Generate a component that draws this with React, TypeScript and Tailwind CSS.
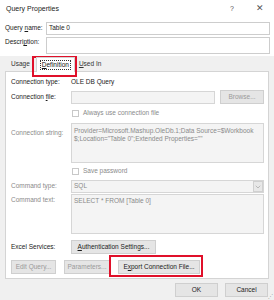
import { ChevronDown } from "lucide-react";

const font = { fontFamily: '"Liberation Sans", Arial, sans-serif' };

function Label({ children, dim }: { children: React.ReactNode; dim?: boolean }) {
  return (
    <div className={`w-[60px] shrink-0 ${dim ? "text-[#8a8a8a]" : "text-[#1a1a1a]"}`}>
      {children}
    </div>
  );
}

function Btn({
  children,
  disabled,
  className = "",
}: {
  children: React.ReactNode;
  disabled?: boolean;
  className?: string;
}) {
  return (
    <div
      className={`flex h-[14px] shrink-0 items-center justify-center whitespace-nowrap border border-[#cfcfcf] bg-[#e5e5e5] ${
        disabled ? "text-[#9a9a9a]" : "text-[#1a1a1a]"
      } ${className}`}
    >
      {children}
    </div>
  );
}

function Check({ label }: { label: string }) {
  return (
    <div className="flex h-[10px] items-center gap-[4px] pl-[61px] text-[#8a8a8a]">
      <div className="h-[7px] w-[7px] border border-[#c8c8c8] bg-white" />
      <span>{label}</span>
    </div>
  );
}

export default function App() {
  return (
    <div
      className="relative h-[300px] w-[274px] overflow-hidden bg-[#f0f0f0] text-[6.5px] leading-none"
      style={font}
    >
      {/* title bar */}
      <div className="flex h-[17px] items-center bg-white pl-[6px] pr-[10px] text-[#222]">
        <span className="flex-1 text-[7px]">Query Properties</span>
        <span className="mr-[22px] text-[7px] text-[#555]">?</span>
        <span className="text-[9px] text-[#555]">✕</span>
      </div>

      {/* name + description */}
      <div className="flex flex-col gap-[2px] bg-white pb-[2px] pl-[5px] pr-[4px] pt-[5px] text-[#1a1a1a]">
        <div className="flex items-center">
          <div className="w-[41px]">
            Query <span className="underline">n</span>ame:
          </div>
          <div className="flex h-[13px] flex-1 items-center border border-[#cdcdcd] bg-white px-[2px]">
            Table 0
          </div>
        </div>
        <div className="flex items-start">
          <div className="w-[41px] pt-[2px]">
            Descri<span className="underline">p</span>tion:
          </div>
          <div className="h-[17px] flex-1 border border-[#cdcdcd] bg-white" />
        </div>
      </div>

      {/* tabs */}
      <div className="flex h-[15px] items-end pl-[5px] pr-[5px]">
        <div className="flex h-[13px] items-center px-[6px] text-[#333]">Usage</div>
        <div className="relative z-10 -mb-px flex h-[15px] items-center border border-b-0 border-[#d4d4d4] bg-white px-[3px]">
          <span className="border border-dotted border-[#333] px-[1px] py-[1px] text-[#111]">
            <span className="underline">D</span>efinition
          </span>
        </div>
        <div className="flex h-[13px] items-center px-[4px] text-[#333]">
          <span className="underline">U</span>sed In
        </div>
      </div>

      {/* tab page */}
      <div className="mx-[5px] flex h-[208px] flex-col border border-[#d4d4d4] bg-white pl-[5px] pr-[4px] pt-[5px]">
        <div className="flex h-[10px] items-center">
          <Label>Connection type:</Label>
          <span className="text-[#1a1a1a]">OLE DB Query</span>
        </div>
        <div className="mt-[3px] flex items-center gap-[5px]">
          <Label>Connection <span className="underline">f</span>ile:</Label>
          <div className="-ml-[5px] h-[13px] flex-1 border border-[#d6d6d6] bg-[#f4f4f4]" />
          <Btn disabled className="h-[13px] w-[44px]">Browse...</Btn>
        </div>
        <div className="mt-[4px]">
          <Check label="Always use connection file" />
        </div>
        <div className="mt-[5px] flex items-start">
          <div className="pt-[7px]">
            <Label dim>Connection string:</Label>
          </div>
          <div className="h-[40px] flex-1 border border-[#d6d6d6] bg-[#f4f4f4] px-[2px] pt-[3px] leading-[8px] text-[#8a8a8a]">
            <div className="whitespace-nowrap">Provider=Microsoft.Mashup.OleDb.1;Data Source=$Workbook</div>
            <div className="whitespace-nowrap">$;Location="Table 0";Extended Properties=""</div>
          </div>
        </div>
        <div className="mt-[3px]">
          <Check label="Save password" />
        </div>
        <div className="mt-[4px] flex items-center">
          <Label dim>Command type:</Label>
          <div className="flex h-[13px] flex-1 items-center border border-[#d6d6d6] bg-[#f4f4f4] pl-[2px] text-[#8a8a8a]">
            <span className="flex-1">SQL</span>
            <div className="flex h-[11px] w-[10px] items-center justify-center border border-[#d0d0d0] bg-[#e8e8e8]">
              <ChevronDown size={8} strokeWidth={1.5} className="text-[#8a8a8a]" />
            </div>
          </div>
        </div>
        <div className="mt-[1px] flex items-start">
          <div className="pt-[3px]">
            <Label dim>Command text:</Label>
          </div>
          <div className="h-[40px] flex-1 border border-[#d6d6d6] bg-[#f4f4f4] px-[2px] pt-[3px] text-[#8a8a8a]">
            SELECT * FROM [Table 0]
          </div>
        </div>
        <div className="mt-[6px] flex items-center">
          <Label>Excel Services:</Label>
          <Btn className="w-[85px]">
            <span className="underline">A</span>uthentication Settings...
          </Btn>
        </div>
        <div className="mt-[6px] flex items-center gap-[8px] pl-[-1px]">
          <Btn disabled className="w-[45px]">Edit Query...</Btn>
          <Btn disabled className="w-[46px]">Parameters...</Btn>
          <Btn className="w-[82px]">
            E<span className="underline">x</span>port Connection File...
          </Btn>
        </div>
      </div>

      {/* ok / cancel */}
      <div className="flex justify-end gap-[7px] pr-[6px] pt-[4px]">
        <Btn className="h-[13px] w-[43px] border-[#3d8fd8]">OK</Btn>
        <Btn className="h-[13px] w-[43px]">Cancel</Btn>
      </div>

      {/* resize grip */}
      <div className="absolute bottom-[1px] right-[1px] text-[5px] leading-none text-[#999]">⋰</div>

      {/* annotation boxes */}
      <div className="absolute left-[32px] top-[56px] h-[21px] w-[45px] border-2 border-[#e0102a]" />
      <div className="absolute left-[109px] top-[255px] h-[22px] w-[94px] border-2 border-[#e0102a]" />
    </div>
  );
}
